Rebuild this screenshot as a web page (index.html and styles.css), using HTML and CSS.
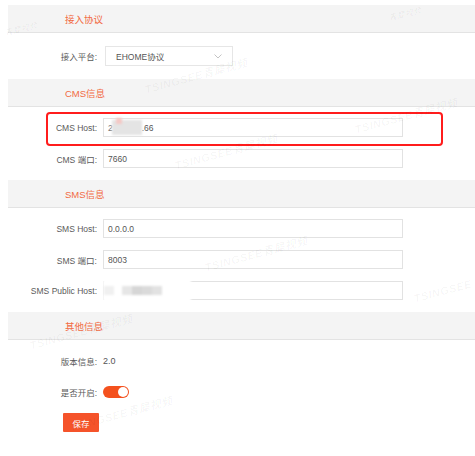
FILE: index.html
```html
<!DOCTYPE html>
<html lang="zh">
<head>
<meta charset="utf-8">
<title>配置</title>
<link rel="stylesheet" href="styles.css">
</head>
<body>
<div class="page">
  <section class="sec">
    <div class="sec-head">接入协议</div>
    <div class="sec-body">
      <div class="row">
        <span class="lbl">接入平台:</span>
        <div class="select">EHOME协议
          <svg class="chev" width="8" height="5" viewBox="0 0 8 5"><polyline points="0.5,0.5 4,4 7.5,0.5" fill="none" stroke="#bdbdbd" stroke-width="0.9"/></svg>
        </div>
      </div>
    </div>
  </section>

  <section class="sec">
    <div class="sec-head">CMS信息</div>
    <div class="sec-body">
      <div class="row">
        <span class="lbl">CMS Host:</span>
        <div class="input"><span class="faint">2</span><span class="mask"><span class="pink"></span></span><span>.66</span></div>
      </div>
      <div class="row">
        <span class="lbl">CMS 端口:</span>
        <div class="input">7660</div>
      </div>
    </div>
  </section>

  <section class="sec">
    <div class="sec-head">SMS信息</div>
    <div class="sec-body">
      <div class="row">
        <span class="lbl">SMS Host:</span>
        <div class="input">0.0.0.0</div>
      </div>
      <div class="row">
        <span class="lbl">SMS 端口:</span>
        <div class="input">8003</div>
      </div>
      <div class="row">
        <span class="lbl">SMS Public Host:</span>
        <div class="input input-masked">
          <div class="mosaic">
            <span class="m1"></span><span class="m2"></span><span class="m3"></span><span class="m4"></span><span class="m5"></span>
          </div>
        </div>
      </div>
    </div>
  </section>

  <section class="sec">
    <div class="sec-head">其他信息</div>
    <div class="sec-body">
      <div class="row">
        <span class="lbl">版本信息:</span>
        <span class="text">2.0</span>
      </div>
      <div class="row">
        <span class="lbl">是否开启:</span>
        <span class="toggle"><span class="knob"></span></span>
      </div>
      <div class="row row-btn">
        <button class="btn">保存</button>
      </div>
    </div>
  </section>

  <div class="highlight"></div>

  <span class="wm wm1">青犀视频</span>
  <span class="wm wm2">TSINGSEE青犀视频</span>
  <span class="wm wm3">青犀视频</span>
  <span class="wm wm5">TSINGSEE青犀视频</span>
  <span class="wm wm6">TSINGSEE青犀视频</span>
  <span class="wm wm8">TSINGSEE青犀视频</span>
  <span class="wm wm9">TSINGSEE</span>
  <span class="wm wm10">TSINGSEE青犀视频</span>
  <span class="wm wm11">TSINGSEE青犀视频</span>
</div>
</body>
</html>
```

FILE: styles.css
```css
html, body {
  margin: 0;
  padding: 0;
  background: #ffffff;
}
body {
  padding: 5px 0 0 8px;
  font-family: "Liberation Sans", "Noto Sans CJK SC", sans-serif;
  font-size: 8.5px;
  color: #555555;
  overflow: hidden;
}
.page {
  position: relative;
}
.sec-head {
  box-sizing: border-box;
  height: 28px;
  line-height: 29px;
  padding-left: 57px;
  background: #f4f4f4;
  border-bottom: 1px solid #e3e3e3;
  color: #f26a43;
  font-size: 9.5px;
}
.sec-body {
  display: flex;
  flex-direction: column;
  gap: 12px;
  padding: 11px 0 12px;
}
.sec:first-child .sec-body {
  padding: 13px 0 14px;
}
.row {
  display: flex;
  align-items: center;
  height: 19px;
}
.lbl {
  width: 89px;
  text-align: right;
  color: #5a5a5a;
  flex: none;
}
.input {
  box-sizing: border-box;
  margin-left: 6px;
  width: 300px;
  height: 19px;
  border: 1px solid #e2e2e2;
  display: flex;
  align-items: center;
  padding-left: 4px;
  color: #555555;
  background: #fff;
}
.select {
  box-sizing: border-box;
  position: relative;
  margin-left: 8px;
  width: 128px;
  height: 20px;
  border: 1px solid #e6e6e6;
  display: flex;
  align-items: center;
  padding-left: 10px;
  color: #555555;
}
.chev {
  position: absolute;
  right: 10px;
  top: 7px;
}
.faint {
  color: #777;
}
.mask {
  position: relative;
  display: inline-block;
  width: 30px;
  height: 15px;
  background: #e4e4e4;
  filter: blur(1px);
  margin-left: -1px;
}
.pink {
  position: absolute;
  left: 4px;
  top: -2px;
  width: 6px;
  height: 6px;
  background: #f4c9c6;
}
.input-masked {
  position: relative;
  padding-left: 0;
}
.mosaic {
  display: flex;
  align-items: center;
  height: 25px;
  width: 87px;
  background: #fff;
  margin-left: -1px;
  padding-left: 1px;
  filter: blur(0.8px);
}
.mosaic span {
  display: block;
  width: 10px;
  height: 9px;
}
.m1 { background: #f0f0f0; }
.m2 { background: #e6e6e6; margin-left: 8px; }
.m3 { background: #d6d6d6; }
.m4 { background: #dadada; }
.m5 { background: #e2e2e2; }
.text {
  margin-left: 6px;
  color: #555;
  font-size: 9px;
}
.toggle {
  position: relative;
  margin-left: 6px;
  width: 26px;
  height: 12px;
  border-radius: 6px;
  background: #f4511e;
}
.knob {
  position: absolute;
  right: 1px;
  top: 1px;
  width: 10px;
  height: 10px;
  border-radius: 50%;
  background: #ffffff;
}
.row-btn {
  padding-left: 55px;
}
.btn {
  width: 36px;
  height: 19px;
  border: none;
  border-radius: 1px;
  background: #f5532a;
  color: #ffffff;
  font-family: "Liberation Sans", "Noto Sans CJK SC", sans-serif;
  font-size: 8.5px;
  padding: 0;
}
.highlight {
  position: absolute;
  left: 38px;
  top: 107px;
  width: 397px;
  height: 34px;
  box-sizing: border-box;
  border: 2px solid #ff1c1c;
  border-radius: 4px;
}
.wm {
  position: absolute;
  white-space: nowrap;
  transform: rotate(-15deg);
  color: rgba(0, 0, 0, 0.04);
  font-family: "Liberation Sans", "Noto Sans CJK SC", sans-serif;
  font-weight: bold;
  font-style: italic;
  font-size: 11px;
  letter-spacing: 0.5px;
  pointer-events: none;
}
.wm1 { left: -4px; top: 18px; font-size: 8px; }
.wm2 { left: 135px; top: 62px; }
.wm3 { left: 380px; top: 3px; font-size: 8px; }
.wm5 { left: 165px; top: 138px; }
.wm6 { left: 345px; top: 102px; }
.wm8 { left: 195px; top: 240px; }
.wm9 { left: 405px; top: 280px; }
.wm10 { left: 20px; top: 318px; }
.wm11 { left: 60px; top: 400px; }
```
